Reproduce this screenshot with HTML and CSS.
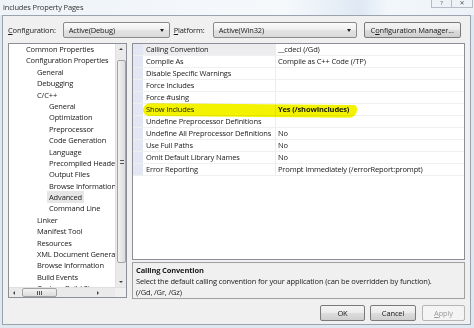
FILE: index.html
```html
<!DOCTYPE html>
<html lang="en">
<head>
    <meta charset="UTF-8">
    <meta name="viewport" content="width=device-width, initial-scale=1.0">
    <title>includes Property Pages</title>
    <link rel="stylesheet" href="styles.css">
</head>
<body>
<div class="window">
    <div class="titlebar">
        <span class="title">includes Property Pages</span>
        <div class="caption-btns">
            <span class="cap-btn">?</span>
            <span class="cap-btn">&#x2715;</span>
        </div>
    </div>
    <div class="client">
        <div class="toolbar">
            <span class="lbl cfg-lbl"><u>C</u>onfiguration:</span>
            <div class="combo cfg-combo"><span>Active(Debug)</span><span class="arrow"></span></div>
            <span class="lbl plat-lbl"><u>P</u>latform:</span>
            <div class="combo plat-combo"><span>Active(Win32)</span><span class="arrow"></span></div>
            <button class="btn mgr-btn">C<u>o</u>nfiguration Manager...</button>
        </div>

        <div class="main">
            <div class="tree">
                <div class="tree-body">
                    <ul class="tree-list">
                        <li class="l0">Common Properties</li>
                        <li class="l0">Configuration Properties</li>
                        <li class="l1">General</li>
                        <li class="l1">Debugging</li>
                        <li class="l1">C/C++</li>
                        <li class="l2">General</li>
                        <li class="l2">Optimization</li>
                        <li class="l2">Preprocessor</li>
                        <li class="l2">Code Generation</li>
                        <li class="l2">Language</li>
                        <li class="l2">Precompiled Headers</li>
                        <li class="l2">Output Files</li>
                        <li class="l2">Browse Information</li>
                        <li class="l2"><span class="sel">Advanced</span></li>
                        <li class="l2">Command Line</li>
                        <li class="l1">Linker</li>
                        <li class="l1">Manifest Tool</li>
                        <li class="l1">Resources</li>
                        <li class="l1">XML Document Generator</li>
                        <li class="l1">Browse Information</li>
                        <li class="l1">Build Events</li>
                        <li class="l1">Custom Build Step</li>
                    </ul>
                    <div class="vscroll">
                        <span class="sb-arrow up"></span>
                        <div class="sb-track">
                            <div class="vthumb"><span class="grip-h"></span></div>
                        </div>
                        <span class="sb-arrow down"></span>
                    </div>
                </div>
                <div class="hscroll">
                    <span class="sb-arrow left"></span>
                    <div class="sb-track">
                        <div class="hthumb"><span class="grip-v"></span></div>
                    </div>
                    <span class="sb-arrow right"></span>
                    <span class="corner"></span>
                </div>
            </div>

            <div class="right">
                <div class="grid">
                    <div class="row selected"><span class="name">Calling Convention</span><span class="value">__cdecl (/Gd)</span></div>
                    <div class="row"><span class="name">Compile As</span><span class="value">Compile as C++ Code (/TP)</span></div>
                    <div class="row"><span class="name">Disable Specific Warnings</span><span class="value"></span></div>
                    <div class="row"><span class="name">Force Includes</span><span class="value"></span></div>
                    <div class="row"><span class="name">Force #using</span><span class="value"></span></div>
                    <div class="row"><span class="name">Show Includes</span><span class="value bold">Yes (/showIncludes)</span></div>
                    <div class="row"><span class="name">Undefine Preprocessor Definitions</span><span class="value"></span></div>
                    <div class="row"><span class="name">Undefine All Preprocessor Definitions</span><span class="value">No</span></div>
                    <div class="row"><span class="name">Use Full Paths</span><span class="value">No</span></div>
                    <div class="row"><span class="name">Omit Default Library Names</span><span class="value">No</span></div>
                    <div class="row"><span class="name">Error Reporting</span><span class="value">Prompt Immediately (/errorReport:prompt)</span></div>
                    <div class="grid-rest"></div>
                    <span class="marker"></span>
                </div>
                <div class="desc">
                    <div class="desc-title">Calling Convention</div>
                    <div class="desc-text">Select the default calling convention for your application (can be overridden by function).<br>(/Gd, /Gr, /Gz)</div>
                </div>
            </div>
        </div>

        <div class="footer">
            <button class="btn ok-btn">OK</button>
            <button class="btn cancel-btn">Cancel</button>
            <button class="btn apply-btn" disabled><u>A</u>pply</button>
        </div>
    </div>
</div>
</body>
</html>
```

FILE: styles.css
```css
* {
    box-sizing: border-box;
}
body {
    margin: 0;
    width: 474px;
    height: 328px;
    overflow: hidden;
    background: #dfe7f0;
    font-family: "Open Sans", "DejaVu Sans", sans-serif;
    font-size: 7.5px;
    letter-spacing: -0.15px;
    color: #1a1a1a;
}
.window {
    height: 328px;
    display: flex;
    flex-direction: column;
}
.titlebar {
    height: 15px;
    display: flex;
    align-items: flex-start;
    justify-content: space-between;
    background: linear-gradient(90deg, #eef3f8, #f6f9fc 60%, #dfe9f4 76%, #f3f7fb 82%, #edf2f8);
}
.title {
    margin: 2px 0 0 3px;
    color: #333;
}
.caption-btns {
    display: flex;
    margin-right: 1px;
}
.cap-btn {
    width: 21px;
    height: 8px;
    border: 1px solid #b6bcc6;
    border-top: none;
    background: #eef1f5;
    font-size: 6px;
    line-height: 7px;
    text-align: center;
    color: #555;
}
.cap-btn + .cap-btn {
    border-left: none;
}
.client {
    flex: 1;
    margin: 0 3px 3px 2px;
    border: 1px solid #9aa3ae;
    background: #f0f0f0;
    padding: 6px 5px 0 5px;
}

/* top toolbar */
.toolbar {
    display: flex;
    align-items: center;
    height: 16px;
}
.lbl u, .btn u {
    text-decoration: underline;
}
.plat-lbl {
    margin-left: 4px;
}
.combo {
    height: 16px;
    display: flex;
    align-items: center;
    justify-content: space-between;
    padding: 0 5px 0 5px;
    border: 1px solid #8a8a8a;
    border-radius: 2px;
    background: linear-gradient(#fbfbfb, #eeeeee 50%, #e3e3e3 51%, #dadada);
}
.cfg-combo {
    width: 107px;
    margin-left: 7px;
}
.plat-combo {
    width: 144px;
    margin-left: 8px;
}
.arrow {
    width: 0;
    height: 0;
    border-left: 2.5px solid transparent;
    border-right: 2.5px solid transparent;
    border-top: 3px solid #222;
}
.btn {
    height: 16px;
    padding: 0;
    font-family: inherit;
    font-size: inherit;
    letter-spacing: inherit;
    color: #1a1a1a;
    border: 1px solid #7a7a7a;
    border-radius: 2px;
    background: linear-gradient(#f4f4f4, #ebebeb 50%, #dddddd 51%, #cfcfcf);
}
.mgr-btn {
    width: 97px;
    margin-left: 7px;
}

/* main panels */
.main {
    display: flex;
    margin-top: 5px;
    height: 256px;
}
.tree {
    width: 119px;
    height: 255px;
    border: 1px solid #8b9097;
    background: #fff;
    display: flex;
    flex-direction: column;
}
.tree-body {
    flex: 1;
    display: flex;
    min-height: 0;
}
.tree-list {
    flex: 1;
    list-style: none;
    margin: 0;
    padding: 0;
    overflow: hidden;
    white-space: nowrap;
}
.tree-list li {
    height: 11.4px;
    line-height: 11.4px;
}
.l0 { padding-left: 17px; }
.l1 { padding-left: 28px; }
.l2 { padding-left: 40px; }
.sel {
    background: #e6e6e6;
    padding: 1px 2px;
    margin-left: -2px;
}

.vscroll {
    width: 11px;
    display: flex;
    flex-direction: column;
    background: #eaeaea;
    border-left: 1px solid #e0e0e0;
}
.sb-track {
    flex: 1;
    display: flex;
}
.vscroll .sb-track {
    flex-direction: column;
    padding: 6px 0 14px 1px;
}
.vthumb {
    flex: 1;
    border: 1px solid #a3a3a3;
    border-radius: 2px;
    background: linear-gradient(90deg, #f2f2f2, #dcdcdc);
    display: flex;
    align-items: center;
    justify-content: center;
}
.grip-h {
    width: 4px;
    height: 4px;
    border-top: 1px solid #555;
    border-bottom: 1px solid #555;
    background: linear-gradient(#fff0 40%, #555 40%, #555 60%, #fff0 60%);
}
.sb-arrow {
    width: 10px;
    height: 10px;
    display: flex;
    align-items: center;
    justify-content: center;
    flex: none;
}
.sb-arrow::before {
    content: "";
    border: 2px solid transparent;
}
.up::before { border-bottom: 2.5px solid #444; border-top-width: 0; }
.down::before { border-top: 2.5px solid #444; border-bottom-width: 0; }
.left::before { border-right: 2.5px solid #444; border-left-width: 0; }
.right::before { border-left: 2.5px solid #444; border-right-width: 0; }

.hscroll {
    height: 10px;
    display: flex;
    background: #eaeaea;
    border-top: 1px solid #e0e0e0;
}
.hscroll .sb-track {
    padding: 0 18px 0 3px;
}
.hthumb {
    flex: 1;
    border: 1px solid #a3a3a3;
    border-radius: 2px;
    background: linear-gradient(#f2f2f2, #dcdcdc);
    display: flex;
    align-items: center;
    justify-content: center;
}
.grip-v {
    width: 5px;
    height: 4px;
    background: repeating-linear-gradient(90deg, #555 0 1px, transparent 1px 2px);
}
.corner {
    width: 11px;
    background: #f0f0f0;
}

.right {
    flex: 1;
    margin-left: 5px;
    display: flex;
    flex-direction: column;
}
.grid {
    position: relative;
    height: 217px;
    border: 1px solid #8b9097;
    background: #fff;
    display: flex;
    flex-direction: column;
}
.row {
    display: flex;
    height: 12px;
    line-height: 11px;
    border-bottom: 1px solid #f0f0f0;
    background: linear-gradient(90deg, #e4e7f3 10px, transparent 10px);
}
.name {
    width: 143px;
    padding-left: 13px;
    border-right: 1px solid #ececec;
    white-space: nowrap;
    overflow: hidden;
}
.value {
    flex: 1;
    padding-left: 2px;
    white-space: nowrap;
    overflow: hidden;
}
.bold {
    font-weight: bold;
}
.row.selected .name {
    background: linear-gradient(90deg, #e4e7f3 10px, #ededf0 10px);
}
.grid-rest {
    flex: 1;
}
.marker {
    position: absolute;
    left: 10px;
    top: 60px;
    width: 214px;
    height: 13px;
    border-radius: 7px 4px 8px 6px;
    background: #f3f300;
    mix-blend-mode: multiply;
    transform: rotate(0.5deg);
}

.desc {
    margin-top: 2px;
    height: 37px;
    border: 1px solid #a0a0a0;
    background: #f0f0f0;
    padding: 2px 3px;
    line-height: 11px;
}
.desc-title {
    font-weight: bold;
}

.footer {
    display: flex;
    justify-content: flex-end;
    margin-top: 6px;
}
.ok-btn {
    width: 45px;
}
.cancel-btn {
    width: 46px;
    margin-left: 5px;
}
.apply-btn {
    width: 43px;
    margin-left: 6px;
    color: #9a9a9a;
    border-color: #b5b5b5;
    background: #f4f4f4;
}
```
